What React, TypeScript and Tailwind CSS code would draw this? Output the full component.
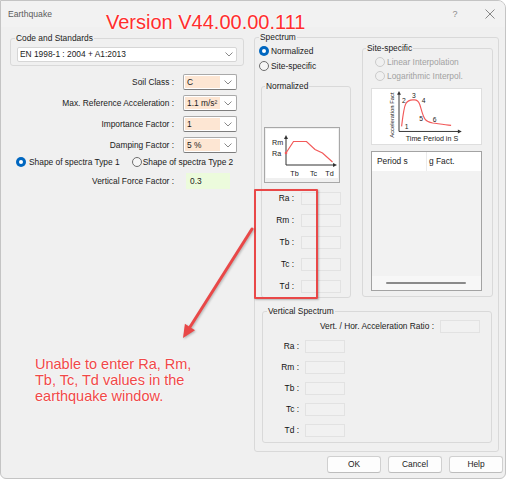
import type { ReactNode } from "react";

const Chevron = () => (
  <svg width="8" height="5" viewBox="0 0 8 5" className="shrink-0">
    <path d="M0.5 0.5 L4 4 L7.5 0.5" fill="none" stroke="#7c7c7c" strokeWidth="0.9" />
  </svg>
);

const Combo = ({ value }: { value: string }) => (
  <div className="flex items-center w-[54px] h-[16px] border border-[#a9a9a9] border-b-[#7d7d7d] rounded-[2px] bg-white p-[1px]">
    <div className="flex-1 h-full bg-[#fde6d3] pl-[2px] flex items-center">{value}</div>
    <div className="w-[15px] flex justify-center">
      <Chevron />
    </div>
  </div>
);

const Radio = ({ checked, disabled }: { checked?: boolean; disabled?: boolean }) =>
  checked ? (
    <span className="block w-[10px] h-[10px] rounded-full bg-[#0067c0] flex items-center justify-center shrink-0">
      <span className="block w-[4px] h-[4px] rounded-full bg-white" />
    </span>
  ) : (
    <span
      className={`block w-[10px] h-[10px] rounded-full border shrink-0 ${
        disabled ? "border-[#cbcbcb] bg-[#f0f0f0]" : "border-[#6e6e6e] bg-[#f6f6f6]"
      }`}
    />
  );

const Field = () => <div className="h-[13px] w-[40px] bg-[#f1f1f1] border border-[#e2e2e2]" />;

const Group = ({
  title,
  className,
  legend,
  children,
}: {
  title: string;
  className: string;
  legend: string;
  children: ReactNode;
}) => (
  <fieldset className={`border border-[#d9d9d9] rounded-[3px] min-w-0 ${className}`}>
    <legend className={`px-[1px] leading-[10px] ${legend}`}>{title}</legend>
    {children}
  </fieldset>
);

const NormalizedChart = () => (
  <svg width="72" height="49" viewBox="0 0 72 49" className="bg-white block">
    <path d="M20 36 V8" stroke="#333" strokeWidth="1" />
    <path d="M18 10 L20 6 L22 10 Z" fill="#333" />
    <path d="M20 36 H69" stroke="#333" strokeWidth="1" />
    <path d="M67 34 L71 36 L67 38 Z" fill="#333" />
    <polyline
      points="20,24 27.5,12.5 40.5,12.5 49,20.5 56.5,24 66.5,33"
      fill="none"
      stroke="#f25a5a"
      strokeWidth="1.2"
    />
    <circle cx="20" cy="24" r="1.3" fill="#f25a5a" />
    <g fontSize="7.2" fill="#222" fontFamily="Liberation Sans, Arial, sans-serif">
      <text x="6" y="15.5">Rm</text>
      <text x="6" y="26.5">Ra</text>
      <text x="28.5" y="46.5" textAnchor="middle">Tb</text>
      <text x="47.5" y="46.5" textAnchor="middle">Tc</text>
      <text x="63.5" y="46.5" textAnchor="middle">Td</text>
    </g>
  </svg>
);

const SiteChart = () => (
  <svg width="111" height="57" viewBox="0 0 111 57" className="bg-white block border border-[#dedede]">
    <path d="M27 44 V4" stroke="#333" strokeWidth="1" />
    <path d="M25 6 L27 2 L29 6 Z" fill="#333" />
    <path d="M27 44 H90" stroke="#333" strokeWidth="1" />
    <path d="M88 42 L92 44 L88 46 Z" fill="#333" />
    <path
      d="M29.7 38.7 C31 28 32 19 34 15.3 C36 12 39 11 42.3 11.3 C45 11 47 12 48.5 16 C50 20 51 27 54 31.3 C56 34 59 34.7 62 35.2 C68 36 74 37 81 37.7"
      fill="none"
      stroke="#f25a5a"
      strokeWidth="1.2"
    />
    <g fontSize="7" fill="#222" fontFamily="Liberation Sans, Arial, sans-serif">
      <text x="33" y="41.5">1</text>
      <text x="30" y="14">2</text>
      <text x="40.5" y="9">3</text>
      <text x="50.5" y="14">4</text>
      <text x="48" y="33">5</text>
      <text x="62" y="34">6</text>
      <text x="34" y="54" fontSize="7.4">Time Period in S</text>
      <text
        x="20"
        y="27"
        fontSize="6.1"
        textAnchor="middle"
        dominantBaseline="middle"
        transform="rotate(-90 20 27)"
      >
        Acceleration Fact
      </text>
    </g>
  </svg>
);

const SpectrumTable = () => (
  <div className="w-[111px] h-[140px] border border-[#a3a3a3] bg-[#f2f2f2] flex flex-col">
    <div className="flex h-[19px] bg-white">
      <div className="w-[55px] pl-[5px] flex items-center border-r border-[#ebebeb]">Period s</div>
      <div className="flex-1 pl-[2px] flex items-center">g Fact.</div>
    </div>
    <div className="flex-1" />
    <div className="h-[14px] bg-[#f7f7f7] flex items-center pl-[14px]">
      <div className="w-[80px] h-[2px] bg-[#8a8a8a] rounded-full" />
    </div>
  </div>
);

const LeftRow = ({ label, children }: { label: string; children: ReactNode }) => (
  <div className="flex items-center h-[16px]">
    <span className="w-[164px] text-right">{label}</span>
    {children}
  </div>
);

const Param = ({ label, w }: { label: string; w: string }) => (
  <div className="flex items-center h-[13px]">
    <span className={`${w} text-right text-[#111]`}>{label}</span>
    <div className="ml-[6px]">
      <Field />
    </div>
  </div>
);

const Button = ({ children }: { children: ReactNode }) => (
  <button className="w-[54px] h-[17px] bg-[#fdfdfd] border border-[#d0d0d0] border-b-[#bdbdbd] rounded-[3px] text-[8.4px] text-[#1b1b1b]">
    {children}
  </button>
);

export default function App() {
  return (
    <div className="w-[508px] h-[480px] bg-white font-['Liberation_Sans',Arial,sans-serif] text-[8.4px] text-[#1b1b1b] leading-none">
      <div className="relative w-[506px] h-[479px] bg-[#f0f0f0] border border-[#c4c4c4] rounded-tr-[8px] rounded-b-[6px] flex flex-col overflow-hidden">
        {/* title bar */}
        <div className="h-[26px] flex items-center pl-[7px] text-[8.6px] text-[#5c5c5c] bg-[#f2f2f2]">
          <span>Earthquake</span>
          <span className="ml-auto w-[10px] text-center text-[#8c8c8c] text-[9px]">?</span>
          <svg width="10" height="10" viewBox="0 0 10 10" className="ml-[25px] mr-[10px]">
            <path d="M0.5 0.5 L9.5 9.5 M9.5 0.5 L0.5 9.5" stroke="#7a7a7a" strokeWidth="0.9" />
          </svg>
        </div>

        <div className="flex pl-[9px]">
          {/* left column */}
          <div className="w-[234px] flex flex-col">
            <Group title="Code and Standards" className="mt-[6px] w-[234px] pb-[3px]" legend="ml-[4px]">
              <div className="mt-[4px] ml-[6px] w-[220px] h-[15px] bg-white border border-[#d6d6d6] rounded-[2px] flex items-center pl-[2px]">
                <span className="flex-1">EN 1998-1 : 2004 + A1:2013</span>
                <span className="w-[15px] flex justify-center">
                  <Chevron />
                </span>
              </div>
            </Group>

            <div className="mt-[8px] flex flex-col gap-[5px]">
              <LeftRow label="Soil Class :">
                <div className="ml-[9px]">
                  <Combo value="C" />
                </div>
              </LeftRow>
              <LeftRow label="Max. Reference Acceleration :">
                <div className="ml-[9px]">
                  <Combo value="1.1 m/s²" />
                </div>
              </LeftRow>
              <LeftRow label="Importance Factor :">
                <div className="ml-[9px]">
                  <Combo value="1" />
                </div>
              </LeftRow>
              <LeftRow label="Damping Factor :">
                <div className="ml-[9px]">
                  <Combo value="5 %" />
                </div>
              </LeftRow>
            </div>

            <div className="mt-[4px] h-[10px] flex items-center pl-[6px]">
              <Radio checked />
              <span className="ml-[3px]">Shape of spectra Type 1</span>
              <span className="ml-[12px] flex">
                <Radio />
              </span>
              <span className="ml-[1px]">Shape of spectra Type 2</span>
            </div>

            <div className="mt-[6px]">
              <LeftRow label="Vertical Force Factor :">
                <div className="ml-[12px] w-[44px] h-[16px] bg-[#ecfbdc] flex items-center pl-[4px]">0.3</div>
              </LeftRow>
            </div>
          </div>

          {/* right column */}
          <div className="ml-[10px] w-[245px]">
            <Group title="Spectrum" className="mt-[5px] w-[245px] h-[420px]" legend="ml-[4px]">
              <div className="flex">
                <div className="flex flex-col">
                  <div className="mt-[4px] pl-[4px] h-[10px] flex items-center">
                    <Radio checked />
                    <span className="ml-[2px]">Normalized</span>
                  </div>
                  <div className="mt-[5px] pl-[4px] h-[10px] flex items-center">
                    <Radio />
                    <span className="ml-[2px]">Site-specific</span>
                  </div>
                  <Group title="Normalized" className="mt-[10px] ml-[6px] w-[90px] h-[217px]" legend="ml-[3px]">
                    <div className="mt-[36px] ml-[2px] w-[76px] h-[56px] border border-[#a8a8a8] p-[1px]">
                      <NormalizedChart />
                    </div>
                    <div className="mt-[9px] flex flex-col gap-[9px]">
                      {["Ra :", "Rm :", "Tb :", "Tc :", "Td :"].map((l) => (
                        <div key={l} className="flex items-center h-[13px]">
                          <span className="w-[32px] text-right text-[#111]">{l}</span>
                          <div className="ml-[7px]">
                            <Field />
                          </div>
                        </div>
                      ))}
                    </div>
                  </Group>
                </div>

                <Group title="Site-specific" className="mt-[1px] ml-[11px] w-[131px] h-[254px]" legend="ml-[3px]">
                  <div className="mt-[4px] ml-[12px] h-[10px] flex items-center text-[#a2a2a2]">
                    <Radio disabled />
                    <span className="ml-[2px]">Linear Interpolation</span>
                  </div>
                  <div className="mt-[4px] ml-[12px] h-[10px] flex items-center text-[#a2a2a2]">
                    <Radio disabled />
                    <span className="ml-[2px]">Logarithmic Interpol.</span>
                  </div>
                  <div className="mt-[7px] ml-[8px]">
                    <SiteChart />
                  </div>
                  <div className="mt-[6px] ml-[8px]">
                    <SpectrumTable />
                  </div>
                </Group>
              </div>

              <Group title="Vertical Spectrum" className="mt-[8px] ml-[7px] w-[230px] h-[137px]" legend="ml-[4px]">
                <div className="mt-[4px] h-[13px] flex items-center justify-end pr-[11px]">
                  <span>Vert. / Hor. Acceleration Ratio :</span>
                  <div className="ml-[6px]">
                    <Field />
                  </div>
                </div>
                <div className="mt-[7px] flex flex-col gap-[8px]">
                  {["Ra :", "Rm :", "Tb :", "Tc :", "Td :"].map((l) => (
                    <Param key={l} label={l} w="w-[36px]" />
                  ))}
                </div>
              </Group>
            </Group>
          </div>
        </div>

        <div className="mt-[4px] flex justify-end gap-[7px] pr-[2px]">
          <Button>OK</Button>
          <Button>Cancel</Button>
          <Button>Help</Button>
        </div>

        {/* annotations pasted over the screenshot */}
        <div className="absolute left-[105px] top-[11px] text-[20px] leading-[20px] text-[#ff2e2e] [text-shadow:0_0_2px_#fff,0_0_2px_#fff] whitespace-nowrap">
          Version V44.00.00.111
        </div>
        <div className="absolute left-[253px] top-[188px] w-[64px] h-[110px] border-2 border-[#e94848] rounded-[1px] shadow-[1px_1px_2px_rgba(0,0,0,0.25)]" />
        <svg className="absolute left-0 top-0 pointer-events-none" width="506" height="479" viewBox="0 0 506 479">
          <g style={{ filter: "drop-shadow(1px 1px 1px rgba(0,0,0,0.25))" }}>
            <line x1="251" y1="228" x2="189" y2="326" stroke="#e94848" strokeWidth="3" strokeLinecap="round" />
            <polygon points="182,337 194,329.2 183.9,322.8" fill="#e94848" />
          </g>
        </svg>
        <div className="absolute left-[34px] top-[355px] text-[14.5px] leading-[16px] text-[#f04848] [text-shadow:0_0_2px_#fff,0_0_2px_#fff]">
          Unable to enter Ra, Rm,
          <br />
          Tb, Tc, Td values in the
          <br />
          earthquake window.
        </div>
      </div>
    </div>
  );
}
